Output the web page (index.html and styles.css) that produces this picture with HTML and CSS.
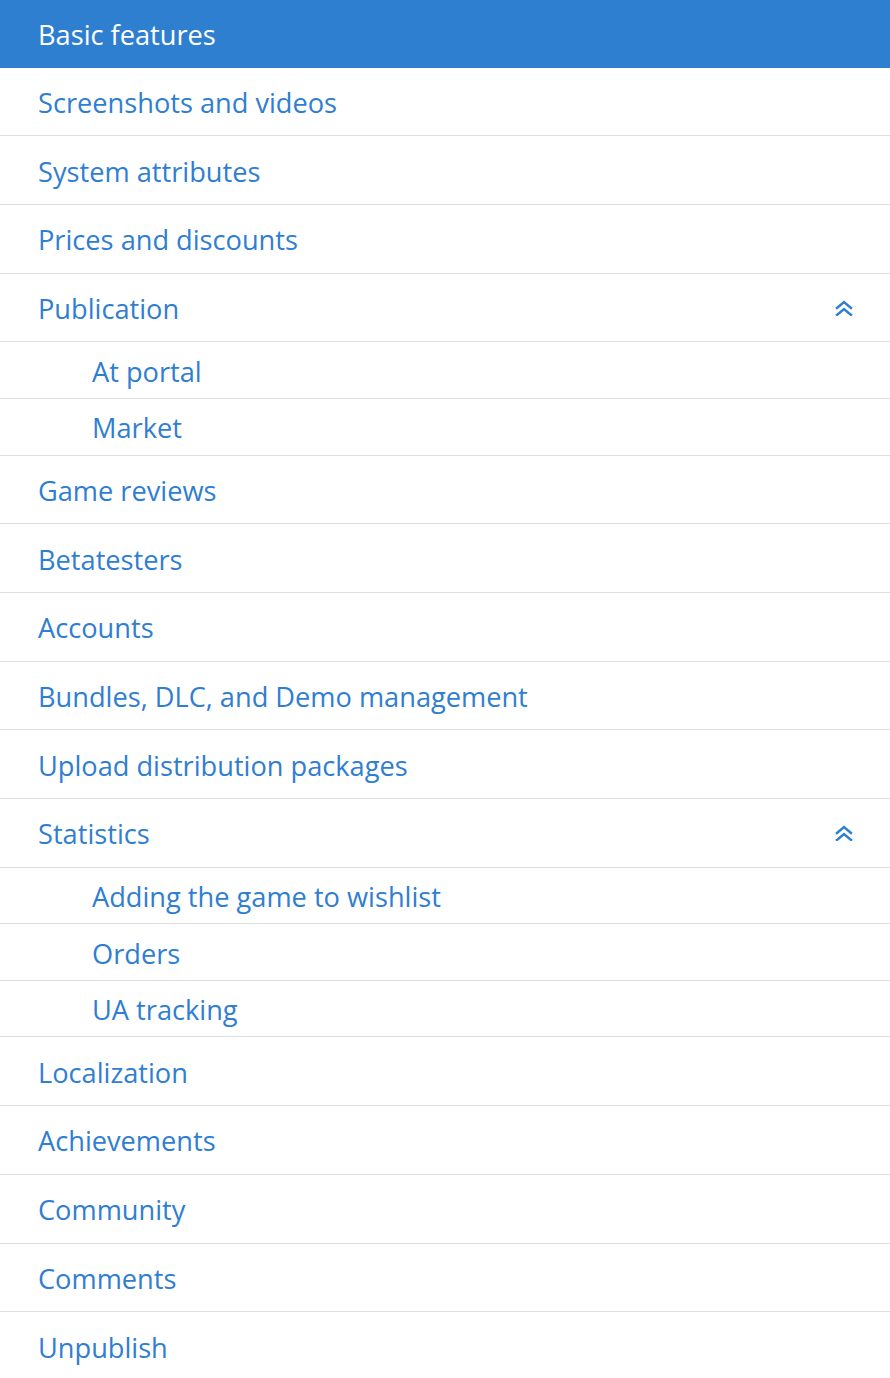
FILE: index.html
```html
<!DOCTYPE html>
<html>
<head>
<meta charset="utf-8">
<link rel="stylesheet" href="styles.css">
</head>
<body>
<ul class="menu">
  <li class="item active">Basic features</li>
  <li class="item">Screenshots and videos</li>
  <li class="item">System attributes</li>
  <li class="item">Prices and discounts</li>
  <li class="item group"><span>Publication</span><svg class="chev" viewBox="0 0 18 16" width="18" height="16"><path d="M2 8 L9 2 L16 8 M2 15 L9 9 L16 15" fill="none" stroke="currentColor" stroke-width="2.4" stroke-linecap="square"/></svg></li>
  <li class="item sub">At portal</li>
  <li class="item sub">Market</li>
  <li class="item">Game reviews</li>
  <li class="item">Betatesters</li>
  <li class="item">Accounts</li>
  <li class="item">Bundles, DLC, and Demo management</li>
  <li class="item">Upload distribution packages</li>
  <li class="item group"><span>Statistics</span><svg class="chev" viewBox="0 0 18 16" width="18" height="16"><path d="M2 8 L9 2 L16 8 M2 15 L9 9 L16 15" fill="none" stroke="currentColor" stroke-width="2.4" stroke-linecap="square"/></svg></li>
  <li class="item sub">Adding the game to wishlist</li>
  <li class="item sub">Orders</li>
  <li class="item sub">UA tracking</li>
  <li class="item">Localization</li>
  <li class="item">Achievements</li>
  <li class="item">Community</li>
  <li class="item">Comments</li>
  <li class="item">Unpublish</li>
</ul>
</body>
</html>
```

FILE: styles.css
```css
html, body {
  margin: 0;
  padding: 0;
  background: #fff;
}
.menu {
  list-style: none;
  margin: 0;
  padding: 0;
  font-family: "Open Sans", "Noto Sans", sans-serif;
  font-size: 27.2px;
  color: #2f7ed1;
}
.item {
  display: flex;
  align-items: center;
  justify-content: space-between;
  box-sizing: border-box;
  height: 68.7px;
  padding: 3px 38px 0;
  border-bottom: 1px solid #dedede;
  line-height: 34px;
}
.item.active {
  height: 67.6px;
  background: #2f7fd1;
  color: #fff;
  border-bottom-color: #2f7fd1;
}
.item.sub {
  height: 56.6px;
  padding-left: 92px;
}
.chev {
  margin-top: -3px;
  margin-right: -1px;
  color: #2f7fd1;
}
```
